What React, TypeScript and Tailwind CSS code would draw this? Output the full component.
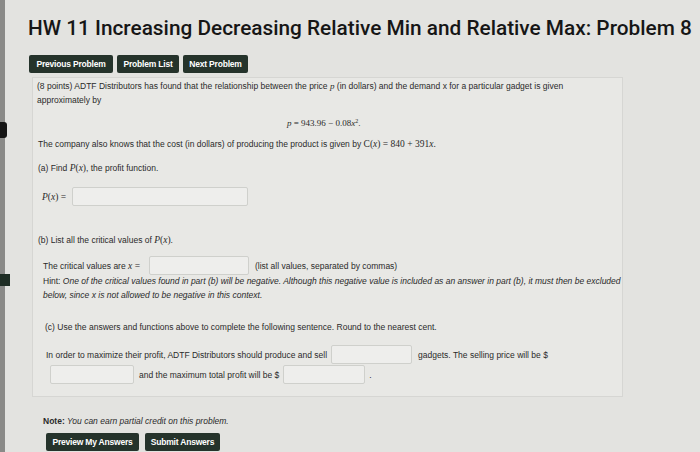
import React from "react";

const serif = { fontFamily: '"Liberation Serif", "Times New Roman", serif' };

function Inp({ w }: { w: string }) {
  return <span className={`inline-block h-[19px] ${w} rounded-[2px] border border-[#cfd0cc] bg-[#eeeeec] align-middle`} />;
}

function Btn({ children, w }: { children: React.ReactNode; w: string }) {
  return (
    <div className={`flex h-[18px] ${w} items-center justify-center rounded-[2px] bg-[#25332b] text-[8.5px] font-bold tracking-[-0.2px] text-white`}>
      {children}
    </div>
  );
}

export default function App() {
  return (
    <div
      className="relative flex h-[452px] w-[700px] overflow-hidden bg-[#e3e3e0] text-[#2a2a2a]"
      style={{ fontFamily: '"Liberation Sans", Arial, sans-serif' }}
    >
      <div className="w-[5px] shrink-0 bg-[#8a8a88]" />
      <div className="absolute left-0 top-[122px] h-[16px] w-[7px] rounded-r-[3px] bg-[#151515]" />
      <div className="absolute left-0 top-[274px] h-[12px] w-[10px] bg-[#1f2e25]" />
      <div className="flex flex-1 flex-col pl-[23px]">
        <h1
          className="mt-[15px] whitespace-nowrap text-[20.8px] font-medium leading-[26px] text-[#161616]"
          style={{ fontFamily: 'Roboto, "Liberation Sans", sans-serif' }}
        >
          HW 11 Increasing Decreasing Relative Min and Relative Max: Problem 8
        </h1>
        <div className="mt-[14px] flex gap-[4px] pl-[1px]">
          <Btn w="w-[84px]">Previous Problem</Btn>
          <Btn w="w-[62px]">Problem List</Btn>
          <Btn w="w-[65px]">Next Problem</Btn>
        </div>
        <div className="ml-[4px] mt-[4px] h-[320px] w-[591px] border border-[#d6d6d3] bg-[#e8e8e5] pl-[4px] pt-[1px] text-[8.5px] leading-[14px]">
          <p>
            (8 points) ADTF Distributors has found that the relationship between the price <i style={serif} className="text-[9px]">p</i> (in dollars) and the demand x for a particular gadget is given
            <br />
            approximately by
          </p>
          <p className="mt-[9px] pl-[250px] text-[9px]" style={serif}>
            <i>p</i> = 943.96 − 0.08<i>x</i>
            <sup className="text-[6px]">2</sup>.
          </p>
          <p className="mt-[7px] pl-[1px]">
            The company also knows that the cost (in dollars) of producing the product is given by{" "}
            <span style={serif} className="text-[9.5px]">
              C(<i>x</i>) = 840 + 391<i>x</i>.
            </span>
          </p>
          <p className="mt-[10px] pl-[1px]">
            (a) Find <span style={serif} className="text-[9.5px]"><i>P</i>(<i>x</i>)</span>, the profit function.
          </p>
          <div className="mt-[12px] flex items-center gap-[6px] pl-[5px]">
            <span style={serif} className="text-[9.5px]"><i>P</i>(<i>x</i>) =</span>
            <Inp w="w-[176px]" />
          </div>
          <p className="mt-[27px] pl-[1px]">
            (b) List all the critical values of <span style={serif} className="text-[9.5px]"><i>P</i>(<i>x</i>)</span>.
          </p>
          <div className="mt-[9px] flex items-center pl-[6px]">
            <span>The critical values are <span style={serif} className="text-[9.5px]"><i>x</i> =</span></span>
            <span className="ml-[9px] flex"><Inp w="w-[100px]" /></span>
            <span className="ml-[6px]">(list all values, separated by commas)</span>
          </div>
          <p className="-mt-[1px] pl-[6px] italic leading-[14px]">
            <span className="not-italic">Hint:</span> One of the critical values found in part (b) will be negative. Although this negative value is included as an answer in part (b), it must then be excluded
            <br />
            below, since x is not allowed to be negative in this context.
          </p>
          <p className="mt-[18px] pl-[8px]">
            (c) Use the answers and functions above to complete the following sentence. Round to the nearest cent.
          </p>
          <div className="mt-[11px] flex items-center pl-[9px]">
            <span>In order to maximize their profit, ADTF Distributors should produce and sell</span>
            <span className="ml-[4px] flex"><Inp w="w-[81px]" /></span>
            <span className="ml-[6px]">gadgets. The selling price will be $</span>
          </div>
          <div className="mt-[1px] flex items-center pl-[13px]">
            <Inp w="w-[84px]" />
            <span className="ml-[5px]">and the maximum total profit will be $</span>
            <span className="ml-[4px] flex"><Inp w="w-[82px]" /></span>
            <span className="ml-[4px]">.</span>
          </div>
        </div>
        <p className="mt-[17px] pl-[15px] text-[8.5px] leading-[14px]">
          <b>Note:</b> <i>You can earn partial credit on this problem.</i>
        </p>
        <div className="mt-[5px] flex gap-[6px] pl-[18px]">
          <Btn w="w-[93px]">Preview My Answers</Btn>
          <Btn w="w-[75px]">Submit Answers</Btn>
        </div>
      </div>
    </div>
  );
}
